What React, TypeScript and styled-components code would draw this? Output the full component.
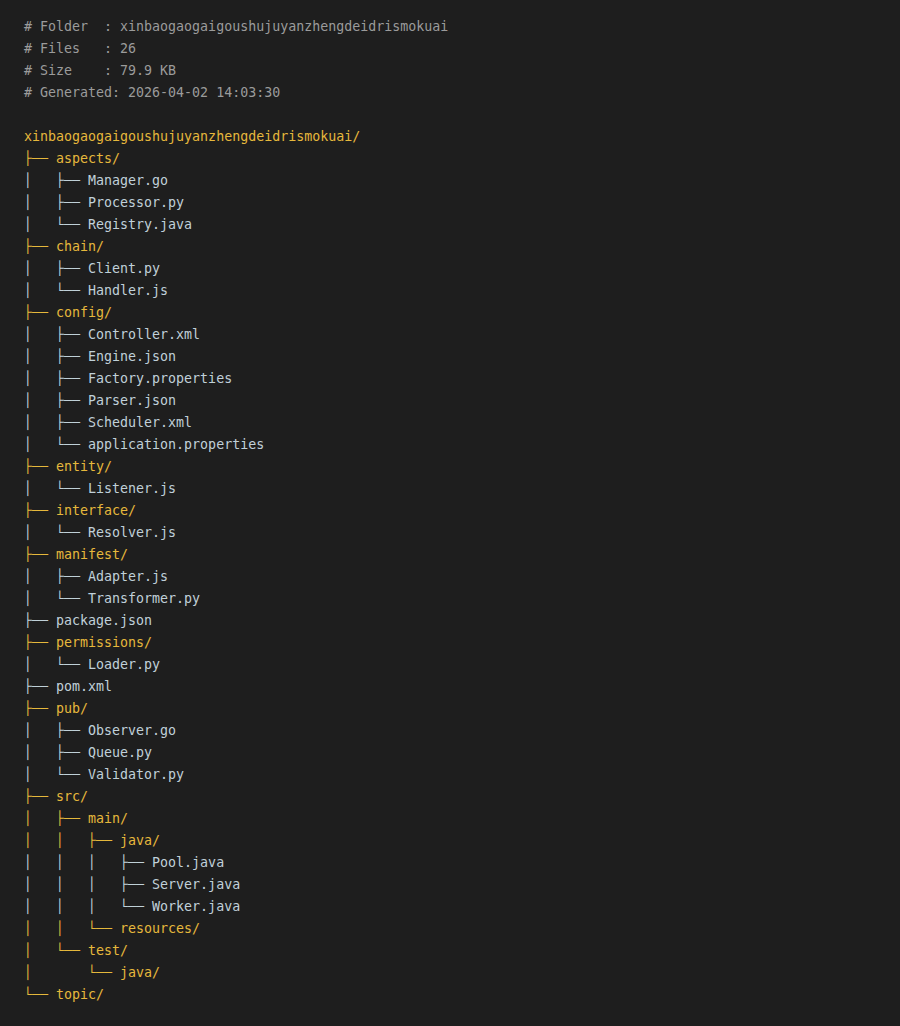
import React from "react";
import styled, { createGlobalStyle } from "styled-components";

const Global = createGlobalStyle`
  html, body { margin: 0; padding: 0; background: #1e1e1e; }
  #root { min-height: 1026px; background: #1e1e1e; }
`;

const Page = styled.div`
  padding: 16px 24px 14px;
  font-family: "DejaVu Sans Mono", "Liberation Mono", monospace;
  font-size: 13.3px;
  line-height: 22px;
  white-space: pre;
`;

type Kind = "meta" | "blank" | "dir" | "file";

const Line = styled.div<{ $kind: Kind }>`
  height: 22px;
  color: ${(p) =>
    p.$kind === "meta" ? "#9b9b9b" : p.$kind === "dir" ? "#e6b83c" : "#c0d0d9"};
`;

const meta = [
  "# Folder  : xinbaogaogaigoushujuyanzhengdeidrismokuai",
  "# Files   : 26",
  "# Size    : 79.9 KB",
  "# Generated: 2026-04-02 14:03:30",
];

const tree: [Kind, string][] = [
  ["dir", "xinbaogaogaigoushujuyanzhengdeidrismokuai/"],
  ["dir", "├── aspects/"],
  ["file", "│   ├── Manager.go"],
  ["file", "│   ├── Processor.py"],
  ["file", "│   └── Registry.java"],
  ["dir", "├── chain/"],
  ["file", "│   ├── Client.py"],
  ["file", "│   └── Handler.js"],
  ["dir", "├── config/"],
  ["file", "│   ├── Controller.xml"],
  ["file", "│   ├── Engine.json"],
  ["file", "│   ├── Factory.properties"],
  ["file", "│   ├── Parser.json"],
  ["file", "│   ├── Scheduler.xml"],
  ["file", "│   └── application.properties"],
  ["dir", "├── entity/"],
  ["file", "│   └── Listener.js"],
  ["dir", "├── interface/"],
  ["file", "│   └── Resolver.js"],
  ["dir", "├── manifest/"],
  ["file", "│   ├── Adapter.js"],
  ["file", "│   └── Transformer.py"],
  ["file", "├── package.json"],
  ["dir", "├── permissions/"],
  ["file", "│   └── Loader.py"],
  ["file", "├── pom.xml"],
  ["dir", "├── pub/"],
  ["file", "│   ├── Observer.go"],
  ["file", "│   ├── Queue.py"],
  ["file", "│   └── Validator.py"],
  ["dir", "├── src/"],
  ["dir", "│   ├── main/"],
  ["dir", "│   │   ├── java/"],
  ["file", "│   │   │   ├── Pool.java"],
  ["file", "│   │   │   ├── Server.java"],
  ["file", "│   │   │   └── Worker.java"],
  ["dir", "│   │   └── resources/"],
  ["dir", "│   └── test/"],
  ["dir", "│       └── java/"],
  ["dir", "└── topic/"],
];

export default function App() {
  return (
    <>
      <Global />
      <Page>
        {meta.map((m, i) => (
          <Line key={"m" + i} $kind="meta">{m}</Line>
        ))}
        <Line $kind="blank"> </Line>
        {tree.map(([k, t], i) => (
          <Line key={"t" + i} $kind={k}>{t}</Line>
        ))}
      </Page>
    </>
  );
}
